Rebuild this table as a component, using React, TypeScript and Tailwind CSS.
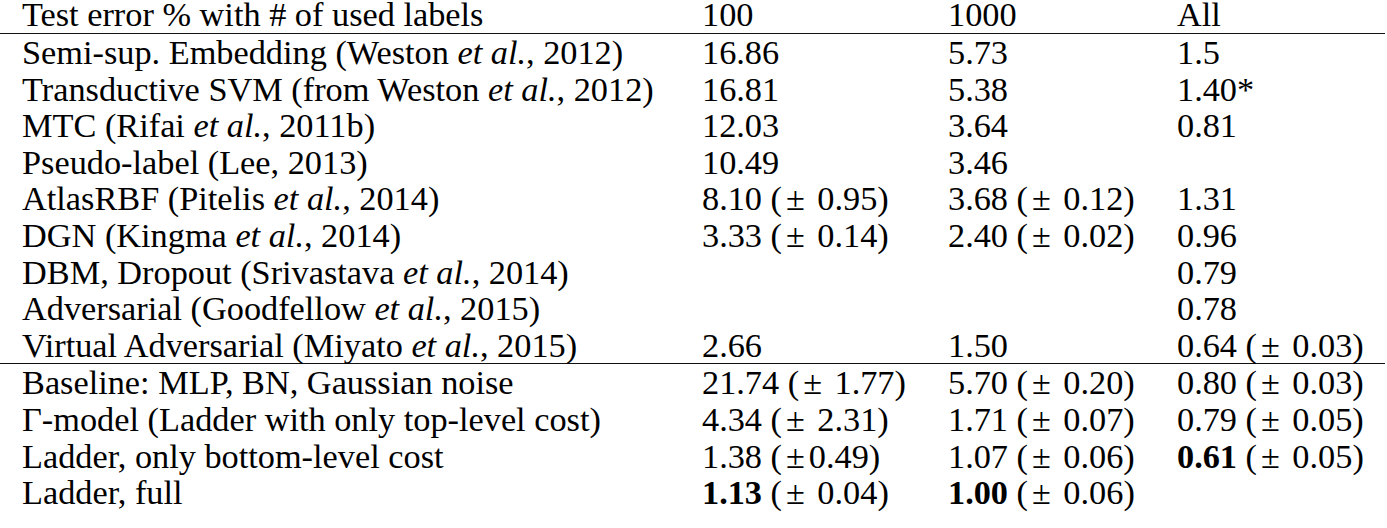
import React from "react";

type Cell = React.ReactNode;

const Et = () => <i>et al.</i>;

// LaTeX's math \pm is wider than the text font's glyph
const Pm = () => <span className="inline-block w-[0.78em] text-center">±</span>;

function withPm(s: string): React.ReactNode {
  const parts = s.split("±");
  if (parts.length === 1) return s;
  return (
    <>
      {parts[0]}
      <Pm />
      {parts[1]}
    </>
  );
}

const rows: { cells: Cell[]; rule?: boolean }[] = [
  {
    cells: [
      <>Semi-sup. Embedding (Weston <Et />, 2012)</>,
      "16.86",
      "5.73",
      "1.5",
    ],
  },
  {
    cells: [
      <>Transductive SVM (from Weston <Et />, 2012)</>,
      "16.81",
      "5.38",
      "1.40*",
    ],
  },
  { cells: [<>MTC (Rifai <Et />, 2011b)</>, "12.03", "3.64", "0.81"] },
  { cells: ["Pseudo-label (Lee, 2013)", "10.49", "3.46", ""] },
  {
    cells: [
      <>AtlasRBF (Pitelis <Et />, 2014)</>,
      "8.10 (± 0.95)",
      "3.68 (± 0.12)",
      "1.31",
    ],
  },
  {
    cells: [
      <>DGN (Kingma <Et />, 2014)</>,
      "3.33 (± 0.14)",
      "2.40 (± 0.02)",
      "0.96",
    ],
  },
  { cells: [<>DBM, Dropout (Srivastava <Et />, 2014)</>, "", "", "0.79"] },
  { cells: [<>Adversarial (Goodfellow <Et />, 2015)</>, "", "", "0.78"] },
  {
    cells: [
      <>Virtual Adversarial (Miyato <Et />, 2015)</>,
      "2.66",
      "1.50",
      "0.64 (± 0.03)",
    ],
    rule: true,
  },
  {
    cells: [
      "Baseline: MLP, BN, Gaussian noise",
      "21.74 (± 1.77)",
      "5.70 (± 0.20)",
      "0.80 (± 0.03)",
    ],
  },
  {
    cells: [
      "Γ-model (Ladder with only top-level cost)",
      "4.34 (± 2.31)",
      "1.71 (± 0.07)",
      "0.79 (± 0.05)",
    ],
  },
  {
    cells: [
      "Ladder, only bottom-level cost",
      "1.38 (±0.49)",
      "1.07 (± 0.06)",
      <><b>0.61</b> (<Pm /> 0.05)</>,
    ],
  },
  {
    cells: [
      "Ladder, full",
      <><b>1.13</b> (<Pm /> 0.04)</>,
      <><b>1.00</b> (<Pm /> 0.06)</>,
      "",
    ],
  },
];

function Cells({ cells }: { cells: Cell[] }) {
  return (
    <>
      {cells.map((c, i) => (
        <div key={i} className="px-[22px] whitespace-nowrap">
          {typeof c === "string" ? withPm(c) : c}
        </div>
      ))}
    </>
  );
}

export default function App() {
  return (
    <div className="w-[1387px] h-[528px] overflow-hidden bg-white text-black">
      <div className="w-[1385px] text-[34.3px] font-['Liberation_Serif',serif]">
        {/* header */}
        <div className="grid grid-cols-[680px_246px_229px_230px] h-[34px] leading-[28px] border-b border-[#111]">
          <Cells cells={["Test error % with # of used labels", "100", "1000", "All"]} />
        </div>
        {rows.map((r, i) => (
          <div
            key={i}
            className={`grid grid-cols-[680px_246px_229px_230px] leading-[36.6px] ${
              r.rule ? "h-[37.6px] border-b border-[#111]" : "h-[36.6px]"
            }`}
          >
            <Cells cells={r.cells} />
          </div>
        ))}
      </div>
    </div>
  );
}
